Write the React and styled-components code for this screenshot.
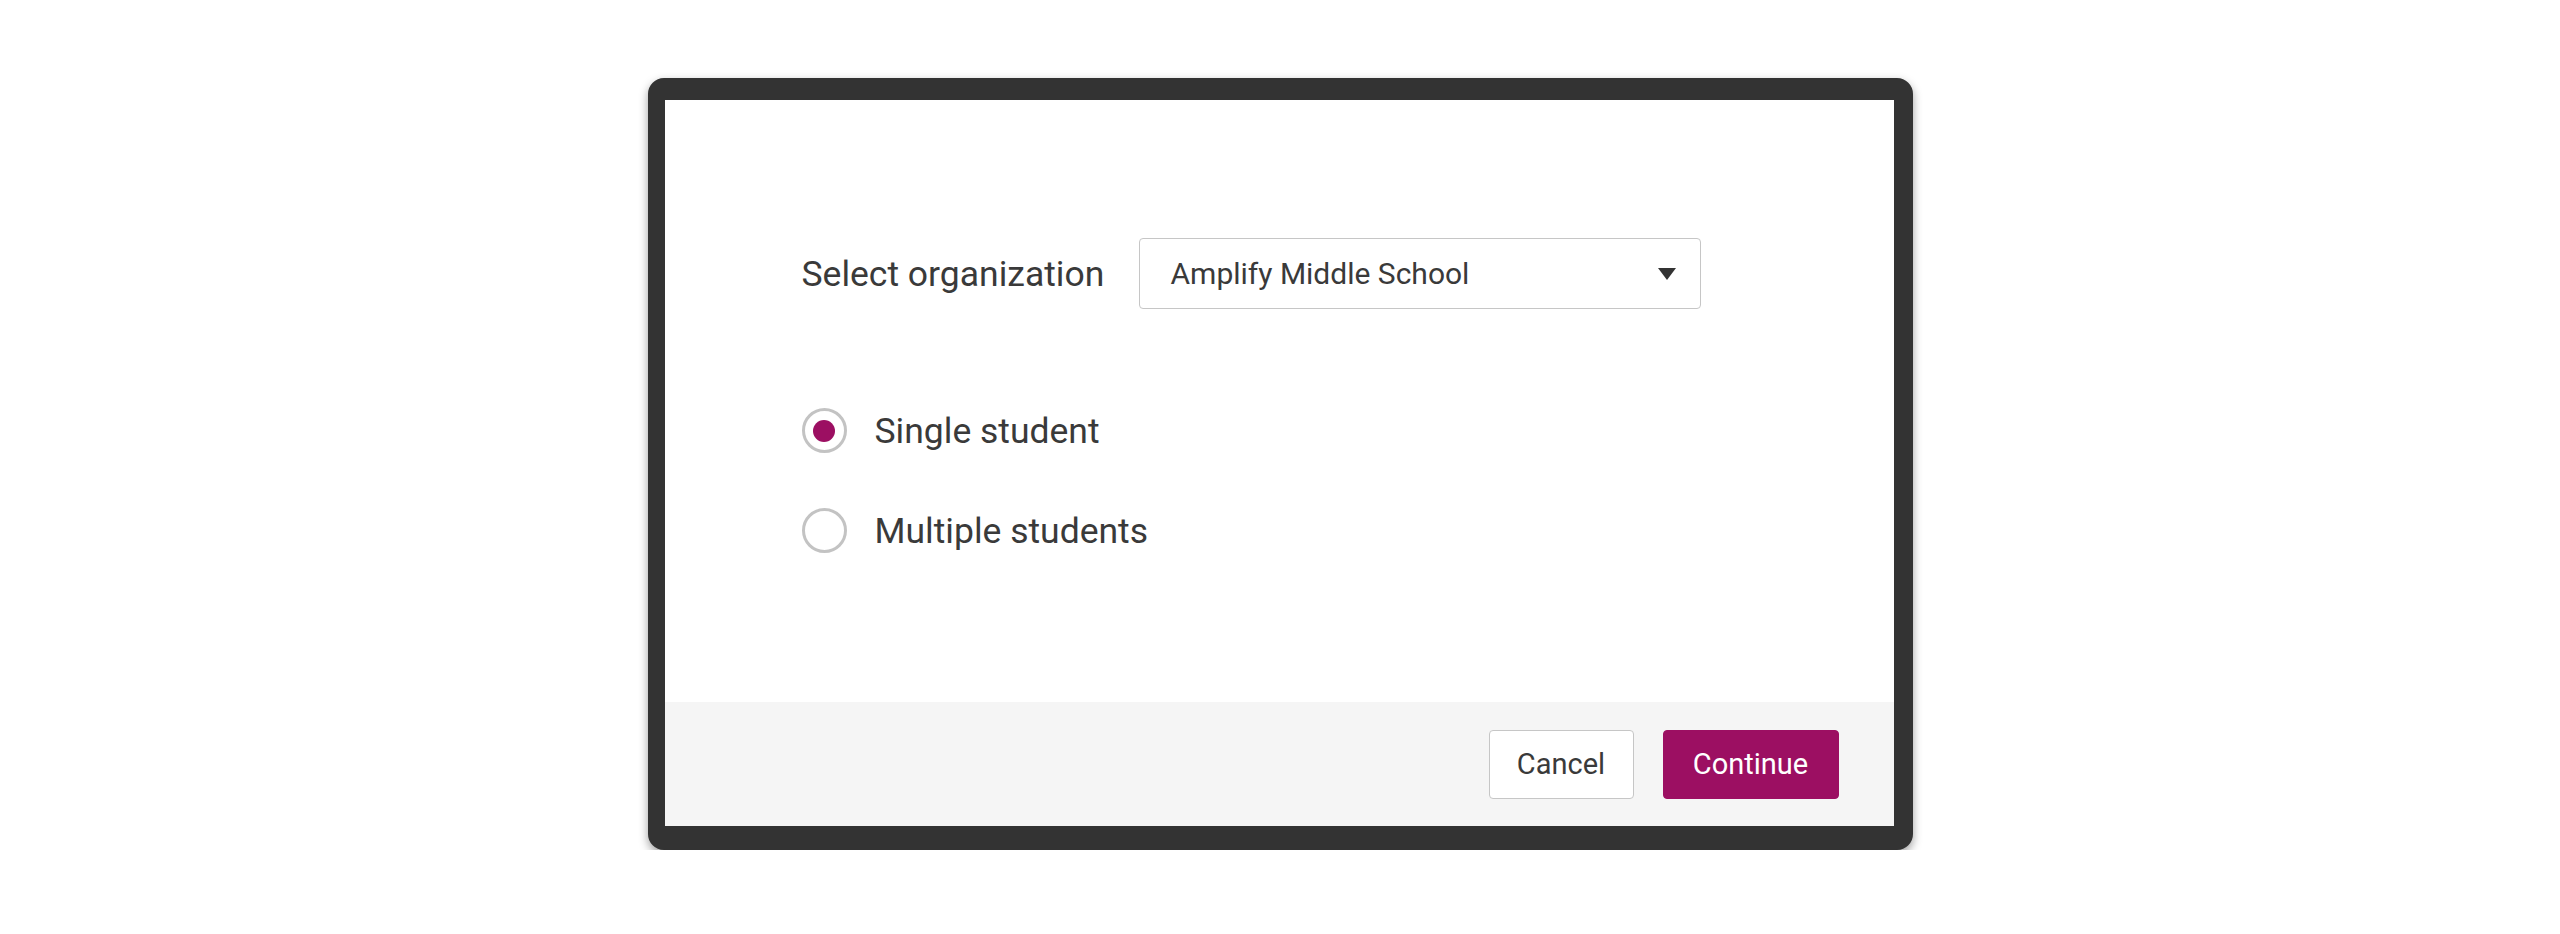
import React, { useState } from "react";
import styled, { createGlobalStyle } from "styled-components";

const GlobalStyle = createGlobalStyle`
  html, body {
    margin: 0;
    padding: 0;
    background: #ffffff;
    font-family: Roboto, "Liberation Sans", Arial, sans-serif;
    color: #3a3a3a;
  }
  * { box-sizing: border-box; }
`;

const ACCENT = "#9c0f62";
const TEXT = "#3a3a3a";

const Stage = styled.div`
  display: flex;
  justify-content: center;
  padding-top: 78px;
`;

const DeviceFrame = styled.div`
  width: 1265px;
  border-style: solid;
  border-color: #333333;
  border-width: 22px 19px 24px 17px;
  border-radius: 16px;
  background: #ffffff;
  box-shadow: 0 4px 10px rgba(0, 0, 0, 0.38);
  display: flex;
  flex-direction: column;
`;

const DialogBody = styled.div`
  height: 602px;
  padding: 138px 0 0 137px;
  display: flex;
  flex-direction: column;
`;

const FieldRow = styled.div`
  display: flex;
  align-items: center;
  height: 71px;
`;

const FieldLabel = styled.label`
  width: 337px;
  font-size: 35.5px;
  line-height: 1;
  color: ${TEXT};
  padding-top: 3px;
`;

const SelectBox = styled.div`
  width: 562px;
  height: 71px;
  border: 1.5px solid #c6c6c6;
  border-radius: 4px;
  display: flex;
  align-items: center;
  justify-content: space-between;
  padding: 0 24px 0 31px;
  font-size: 30px;
  color: ${TEXT};
  cursor: pointer;
`;

const Caret = styled.svg`
  width: 18px;
  height: 12px;
  display: block;
`;

const RadioGroup = styled.div`
  display: flex;
  flex-direction: column;
  gap: 55px;
  margin-top: 99px;
`;

const RadioRow = styled.label`
  display: flex;
  align-items: center;
  gap: 28px;
  height: 45px;
  cursor: pointer;
`;

const RadioCircle = styled.span`
  width: 45px;
  height: 45px;
  border-radius: 50%;
  border: 3px solid #c3c3c3;
  display: flex;
  align-items: center;
  justify-content: center;
  flex: none;

  &::after {
    content: "";
    width: 22px;
    height: 22px;
    border-radius: 50%;
    background: ${ACCENT};
    display: ${(p) => (p.$checked ? "block" : "none")};
  }
`;

const RadioText = styled.span`
  font-size: 35.5px;
  line-height: 1;
  color: ${TEXT};
  padding-top: 2px;
`;

const Footer = styled.div`
  height: 124px;
  background: #f5f5f5;
  display: flex;
  align-items: center;
  justify-content: flex-end;
  gap: 29px;
  padding-right: 55px;
`;

const Button = styled.button`
  height: 69px;
  width: ${(p) => p.$width}px;
  border-radius: 4px;
  font-family: Roboto, "Liberation Sans", Arial, sans-serif;
  font-size: 29px;
  cursor: pointer;
  border: 1.5px solid ${(p) => (p.$primary ? ACCENT : "#c6c6c6")};
  background: ${(p) => (p.$primary ? ACCENT : "#ffffff")};
  color: ${(p) => (p.$primary ? "#ffffff" : TEXT)};
  padding: 0;
`;

const options = [
  { id: "single", label: "Single student" },
  { id: "multiple", label: "Multiple students" },
];

export default function App() {
  const [mode, setMode] = useState("single");

  return (
    <>
      <GlobalStyle />
      <Stage>
        <DeviceFrame>
          <DialogBody>
            <FieldRow>
              <FieldLabel>Select organization</FieldLabel>
              <SelectBox>
                <span>Amplify Middle School</span>
                <Caret viewBox="0 0 18 12">
                  <path d="M0 0 H18 L9 12 Z" fill="#333333" />
                </Caret>
              </SelectBox>
            </FieldRow>
            <RadioGroup>
              {options.map((o) => (
                <RadioRow key={o.id} onClick={() => setMode(o.id)}>
                  <RadioCircle $checked={mode === o.id} />
                  <RadioText>{o.label}</RadioText>
                </RadioRow>
              ))}
            </RadioGroup>
          </DialogBody>
          <Footer>
            <Button $width={145}>Cancel</Button>
            <Button $width={176} $primary>
              Continue
            </Button>
          </Footer>
        </DeviceFrame>
      </Stage>
    </>
  );
}
